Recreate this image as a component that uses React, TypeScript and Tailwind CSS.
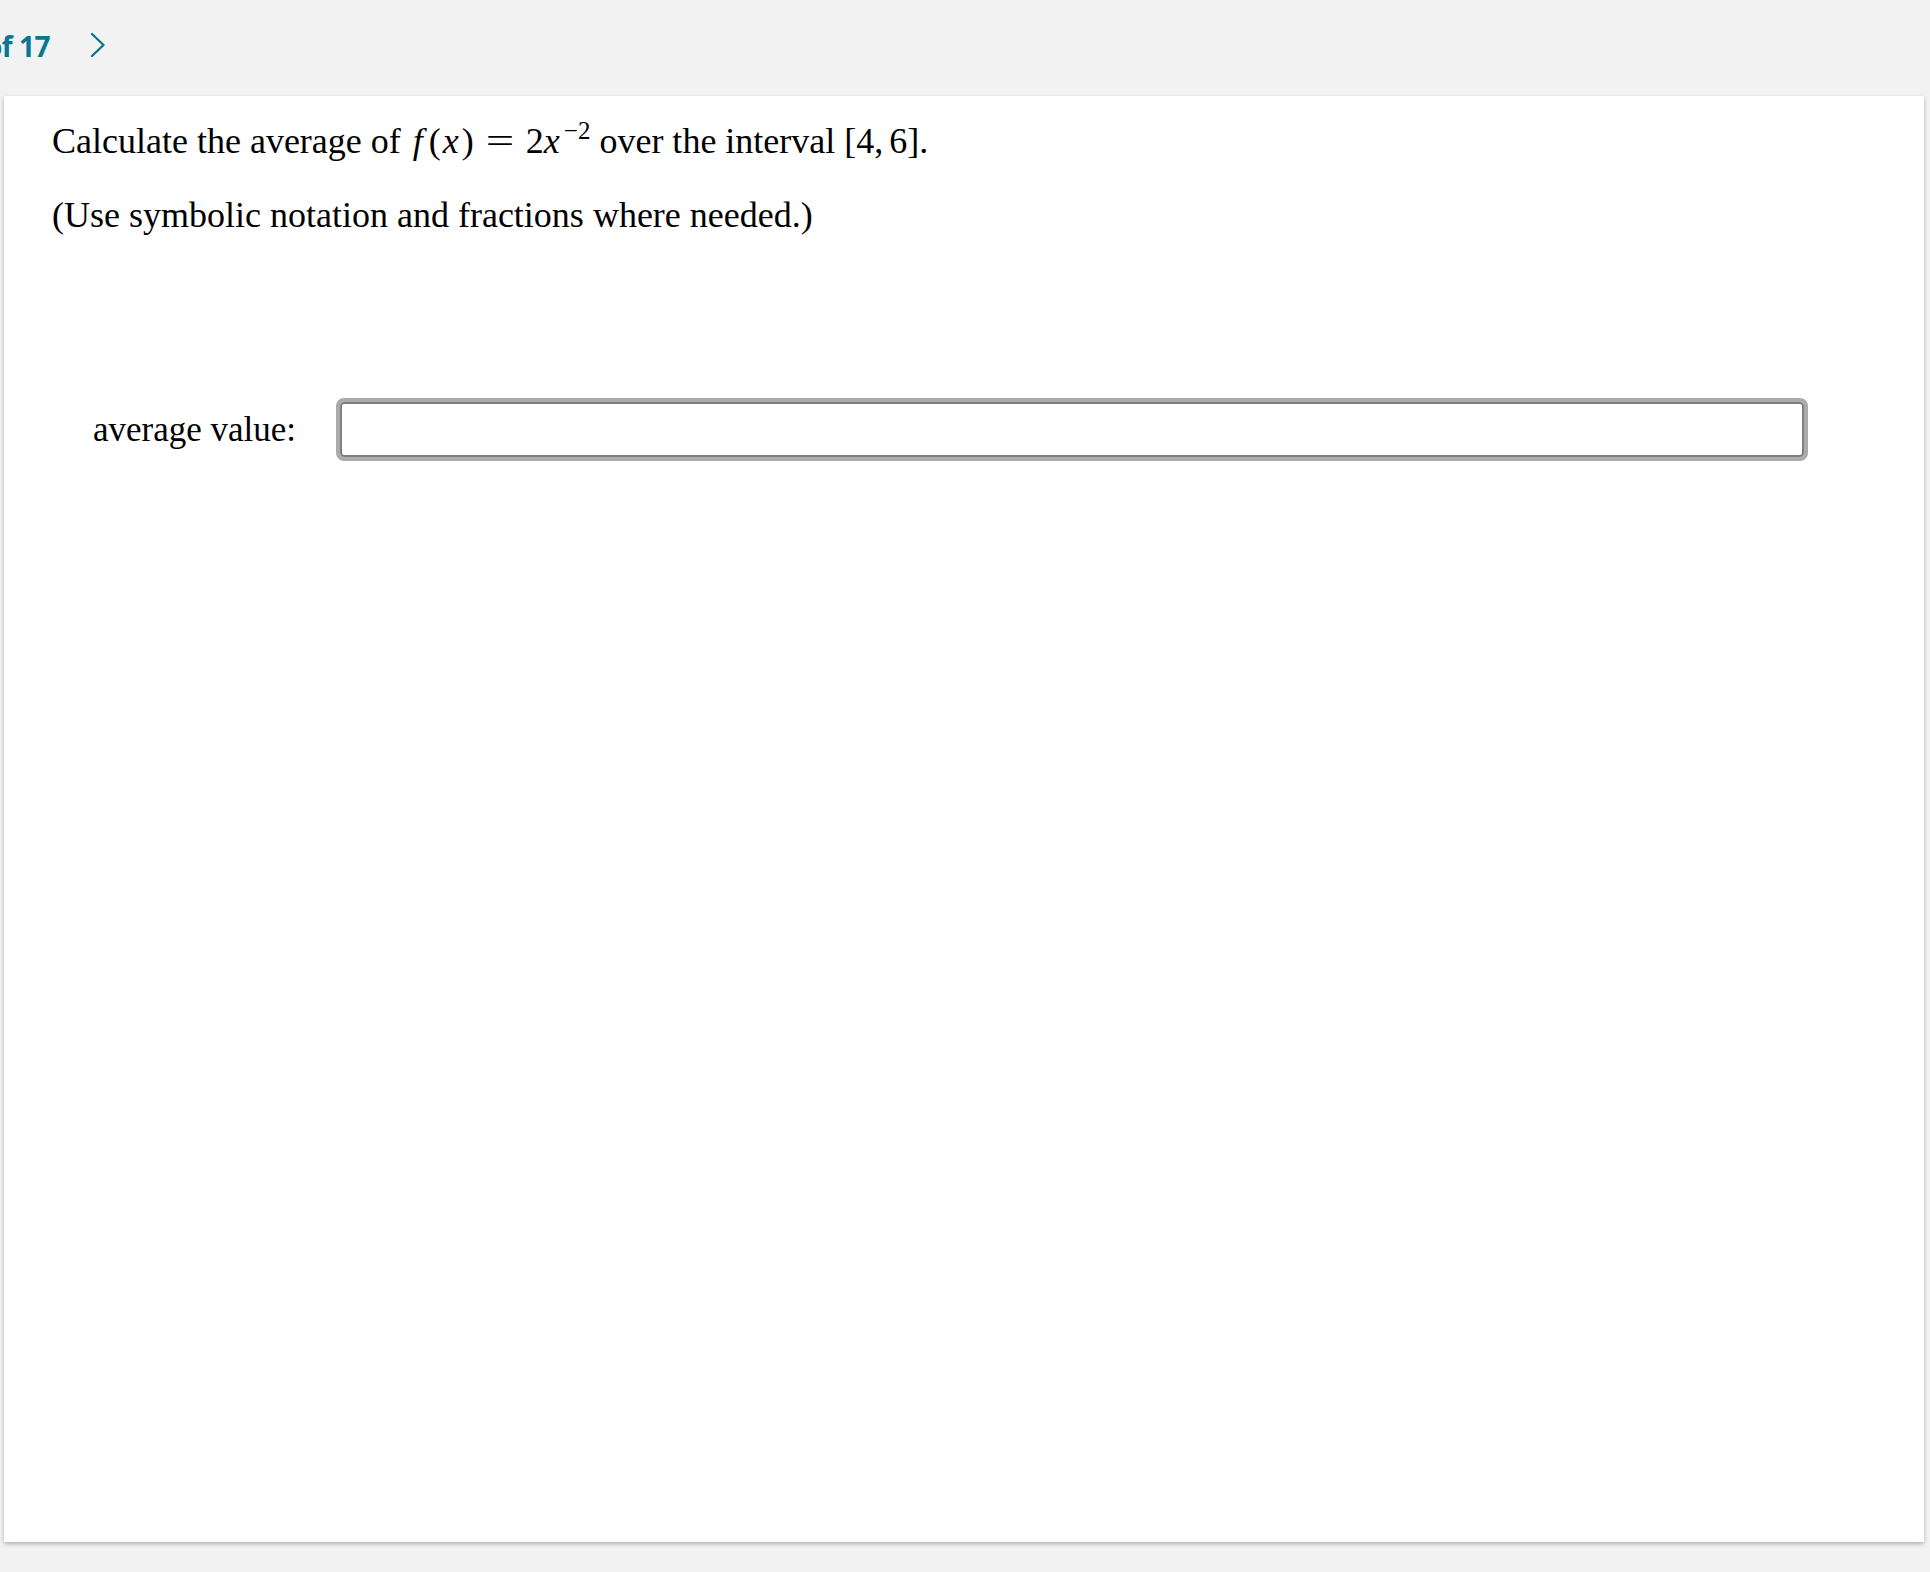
export default function App() {
  const serif = { fontFamily: '"Liberation Serif", "Times New Roman", serif' };

  return (
    <div className="min-h-screen bg-[#f2f2f2]">
      {/* Barra de navegação da questão */}
      <div
        className="h-[92px] flex items-center overflow-hidden"
        style={{ fontFamily: '"Open Sans", "Liberation Sans", sans-serif' }}
      >
        <span className="-ml-[15px] text-[28px] font-bold text-[#0b7592] tracking-[-0.5px] whitespace-nowrap">
          of 17
        </span>
        <svg
          className="ml-[40px] mt-[-2px]"
          width="16"
          height="26"
          viewBox="0 0 16 26"
          fill="none"
          stroke="#0b7592"
          strokeWidth="2.4"
          strokeLinecap="round"
          strokeLinejoin="round"
        >
          <polyline points="2,2 13.5,13 2,24" />
        </svg>
      </div>

      {/* Cartão da questão */}
      <div
        className="mt-[4px] ml-[4px] mr-[6px] h-[1446px] bg-white shadow-[0_2px_4px_rgba(0,0,0,0.28)] pt-[18px] px-[48px] text-black"
        style={serif}
      >
        <p className="text-[36px] leading-[54px]">
          Calculate the average of{" "}
          <span className="italic ml-[3px] mr-[6px]">f</span>(
          <span className="italic ml-[2px] mr-[3px]">x</span>)
          <span className="inline-block w-[28px] mx-[12px] text-center scale-x-[1.4]">
            =
          </span>
          2<span className="italic mr-[2px]">x</span>
          <span className="ml-[2px] align-[14px] text-[25px] leading-none">−2</span>{" "}
          over the interval [4,<span className="ml-[6px]">6</span>].
        </p>
        <p className="mt-[20px] text-[36px] leading-[54px]">
          (Use symbolic notation and fractions where needed.)
        </p>

        <div className="mt-[156px] ml-[41px] flex items-center">
          <span className="text-[35px] leading-[54px] whitespace-nowrap">
            average value:
          </span>
          <input
            type="text"
            className="ml-[40px] w-[1472px] h-[63px] rounded-[8px] border-[4px] border-[#ababab] shadow-[inset_0_0_0_2px_#7f7f7f] bg-white outline-none px-3 text-[30px]"
          />
        </div>
      </div>
    </div>
  );
}
